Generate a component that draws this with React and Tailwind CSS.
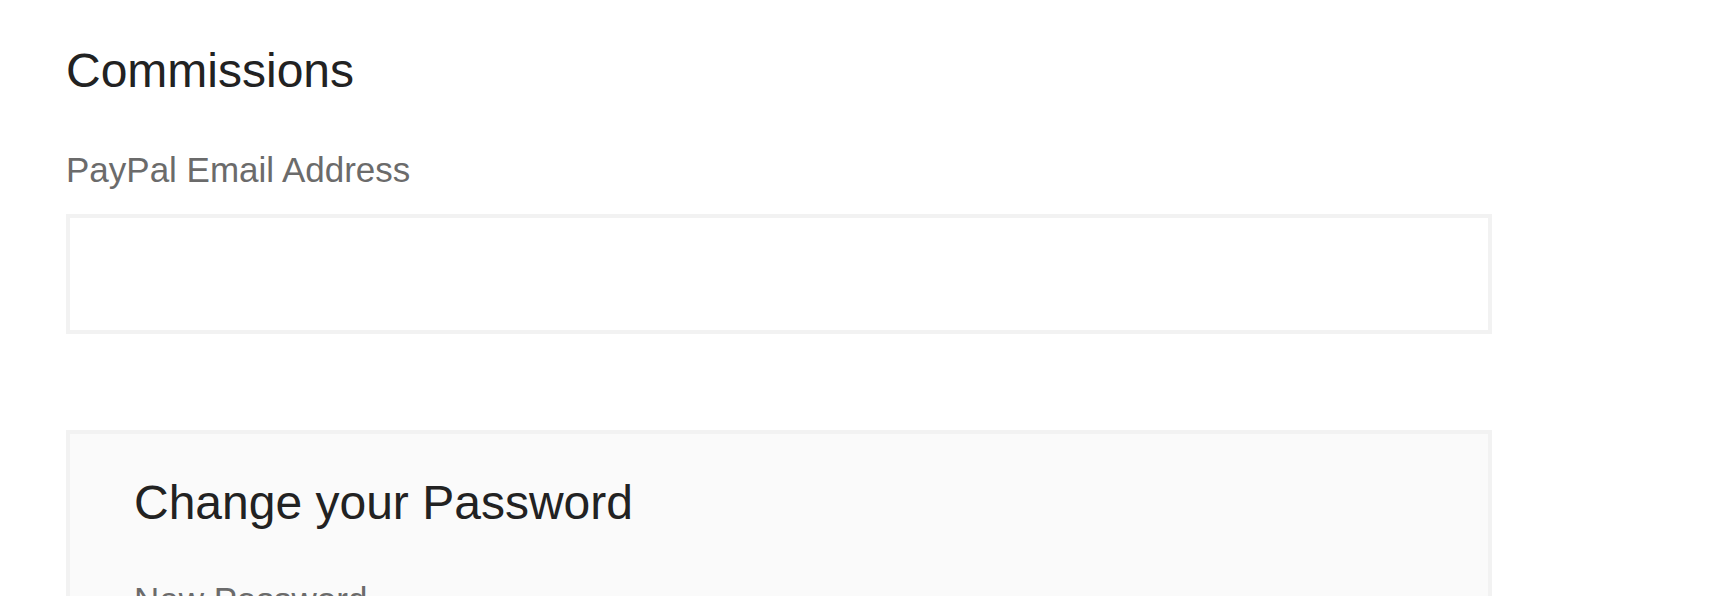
const App = () => {
  return (
    <div className="min-h-screen bg-white font-['Liberation_Sans',Arial,sans-serif] pl-[66px] pt-[47px]">
      <div className="w-[1426px]">
        <h2 className="text-[48px] leading-none text-[#222222]">Commissions</h2>

        <label className="block mt-[57px] text-[35px] leading-none text-[#6b6b6b]">
          PayPal Email Address
        </label>
        <input
          type="email"
          className="block mt-[27px] h-[120px] w-full border-4 border-[#f2f2f2] bg-white outline-none"
        />

        <div className="mt-[96px] border-4 border-[#f2f2f2] bg-[#fafafa] px-[64px] pt-[45px] pb-[60px]">
          <h3 className="text-[48px] leading-none text-[#222222]">Change your Password</h3>
          <label className="block mt-[55px] text-[35px] leading-none text-[#6b6b6b]">
            New Password
          </label>
          <input
            type="password"
            className="block mt-[27px] h-[120px] w-full border-4 border-[#f2f2f2] bg-white outline-none"
          />
        </div>
      </div>
    </div>
  );
};

export default App;
